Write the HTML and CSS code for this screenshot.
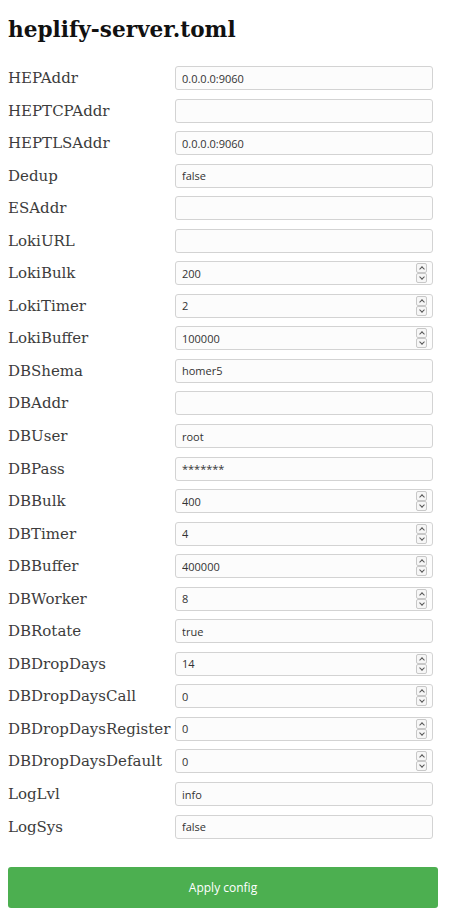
FILE: index.html
```html
<!DOCTYPE html>
<html>
<head>
<meta charset="utf-8">
<link rel="stylesheet" href="styles.css">
</head>
<body>
<div class="page">
  <h1 class="title">heplify-server.toml</h1>
  <form class="config">
    <div class="row"><label class="lbl">HEPAddr</label><div class="field"><input class="inp" type="text" value="0.0.0.0:9060"></div></div>
    <div class="row"><label class="lbl">HEPTCPAddr</label><div class="field"><input class="inp" type="text" value=""></div></div>
    <div class="row"><label class="lbl">HEPTLSAddr</label><div class="field"><input class="inp" type="text" value="0.0.0.0:9060"></div></div>
    <div class="row"><label class="lbl">Dedup</label><div class="field"><input class="inp" type="text" value="false"></div></div>
    <div class="row"><label class="lbl">ESAddr</label><div class="field"><input class="inp" type="text" value=""></div></div>
    <div class="row"><label class="lbl">LokiURL</label><div class="field"><input class="inp" type="text" value=""></div></div>
    <div class="row"><label class="lbl">LokiBulk</label><div class="field"><input class="inp" type="text" value="200"><span class="spin"><span class="up"></span><span class="down"></span></span></div></div>
    <div class="row"><label class="lbl">LokiTimer</label><div class="field"><input class="inp" type="text" value="2"><span class="spin"><span class="up"></span><span class="down"></span></span></div></div>
    <div class="row"><label class="lbl">LokiBuffer</label><div class="field"><input class="inp" type="text" value="100000"><span class="spin"><span class="up"></span><span class="down"></span></span></div></div>
    <div class="row"><label class="lbl">DBShema</label><div class="field"><input class="inp" type="text" value="homer5"></div></div>
    <div class="row"><label class="lbl">DBAddr</label><div class="field"><input class="inp" type="text" value=""></div></div>
    <div class="row"><label class="lbl">DBUser</label><div class="field"><input class="inp" type="text" value="root"></div></div>
    <div class="row"><label class="lbl">DBPass</label><div class="field"><input class="inp" type="text" value="*******"></div></div>
    <div class="row"><label class="lbl">DBBulk</label><div class="field"><input class="inp" type="text" value="400"><span class="spin"><span class="up"></span><span class="down"></span></span></div></div>
    <div class="row"><label class="lbl">DBTimer</label><div class="field"><input class="inp" type="text" value="4"><span class="spin"><span class="up"></span><span class="down"></span></span></div></div>
    <div class="row"><label class="lbl">DBBuffer</label><div class="field"><input class="inp" type="text" value="400000"><span class="spin"><span class="up"></span><span class="down"></span></span></div></div>
    <div class="row"><label class="lbl">DBWorker</label><div class="field"><input class="inp" type="text" value="8"><span class="spin"><span class="up"></span><span class="down"></span></span></div></div>
    <div class="row"><label class="lbl">DBRotate</label><div class="field"><input class="inp" type="text" value="true"></div></div>
    <div class="row"><label class="lbl">DBDropDays</label><div class="field"><input class="inp" type="text" value="14"><span class="spin"><span class="up"></span><span class="down"></span></span></div></div>
    <div class="row"><label class="lbl">DBDropDaysCall</label><div class="field"><input class="inp" type="text" value="0"><span class="spin"><span class="up"></span><span class="down"></span></span></div></div>
    <div class="row"><label class="lbl">DBDropDaysRegister</label><div class="field"><input class="inp" type="text" value="0"><span class="spin"><span class="up"></span><span class="down"></span></span></div></div>
    <div class="row"><label class="lbl">DBDropDaysDefault</label><div class="field"><input class="inp" type="text" value="0"><span class="spin"><span class="up"></span><span class="down"></span></span></div></div>
    <div class="row"><label class="lbl">LogLvl</label><div class="field"><input class="inp" type="text" value="info"></div></div>
    <div class="row"><label class="lbl">LogSys</label><div class="field"><input class="inp" type="text" value="false"></div></div>
    <button class="apply" type="button">Apply config</button>
  </form>
</div>
</body>
</html>
```
FILE: styles.css
```css
html, body {
  margin: 0;
  padding: 0;
  background: #fff;
}
.page {
  padding: 0 8px;
  width: 430px;
}
.title {
  font-family: "DejaVu Serif", serif;
  font-weight: bold;
  font-size: 21.6px;
  line-height: 24px;
  margin: 18px 0 0 0;
  color: #111;
}
.config {
  display: flex;
  flex-direction: column;
  margin-top: 24px;
}
.row {
  display: grid;
  grid-template-columns: 167px 258px;
  align-items: center;
  height: 24px;
  margin-bottom: 8.55px;
}
.lbl {
  font-family: "DejaVu Serif", serif;
  font-size: 15px;
  color: #3c3c3c;
  white-space: nowrap;
}
.field {
  position: relative;
  height: 24px;
}
.inp {
  box-sizing: border-box;
  width: 100%;
  height: 24px;
  margin: 0;
  padding: 0 6px;
  border: 1px solid #d3d3d3;
  border-radius: 3px;
  background: #fcfcfc;
  font-family: "Open Sans", sans-serif;
  font-size: 11px;
  color: #333;
  outline: none;
}
.spin {
  position: absolute;
  right: 6px;
  top: 2px;
  width: 11px;
  height: 20px;
  display: flex;
  flex-direction: column;
}
.spin .up, .spin .down {
  flex: 1;
  box-sizing: border-box;
  border: 1px solid #c8c8c8;
  border-radius: 2px;
  background: #f6f6f6;
  position: relative;
}
.spin .up::after, .spin .down::after {
  content: "";
  position: absolute;
  left: 3px;
  width: 3px;
  height: 3px;
  border-left: 1px solid #555;
  border-top: 1px solid #555;
}
.spin .up::after {
  top: 3px;
  transform: rotate(45deg);
}
.spin .down::after {
  top: 1px;
  transform: rotate(225deg);
}
.apply {
  margin-top: 20px;
  width: 430px;
  height: 41px;
  border: none;
  border-radius: 3px;
  background: #4caf50;
  color: #fff;
  font-family: "Open Sans", sans-serif;
  font-size: 12px;
  cursor: pointer;
}
```
